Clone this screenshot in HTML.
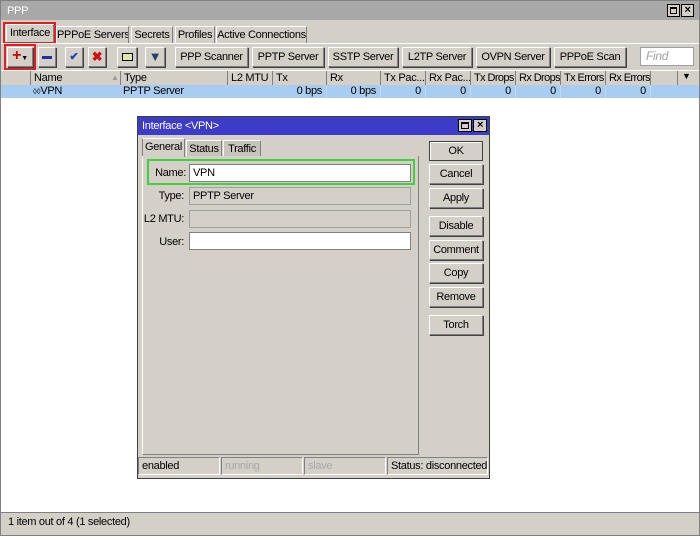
<!DOCTYPE html>
<html><head><style>
*{box-sizing:border-box;margin:0;padding:0}
body{width:700px;height:536px;background:#d4d0c8;font-family:"Liberation Sans",sans-serif;font-size:11px;letter-spacing:-0.3px;color:#000;position:relative;overflow:hidden;white-space:nowrap}
.a{position:absolute}
.btn{position:absolute;border:1px solid #fff;border-right-color:#808080;border-bottom-color:#808080;background:#d4d0c8;text-align:center;line-height:18px;box-shadow:1px 1px 0 #404040;overflow:hidden}
.tab{position:absolute;border:1px solid #fff;border-right-color:#808080;border-bottom:none;text-align:center;line-height:16px;background:#d4d0c8;overflow:hidden}
.hc{position:absolute;top:71px;height:14px;border-right:1px solid #808080;line-height:14px;padding-left:3px;overflow:hidden}
.rc{position:absolute;top:85px;height:13px;line-height:13px;text-align:right;padding-right:4px;border-right:1px solid #c0d8f0}
.inp{position:absolute;height:18px;border:1px solid #808080;background:#fff;line-height:16px;padding-left:3px}
.sb{position:absolute;height:18px;border:1px solid #808080;border-right-color:#fff;border-bottom-color:#fff;line-height:16px;padding-left:3px;overflow:hidden}
</style></head><body>
<div class="a" style="left:0;top:0;width:700px;height:536px;border:1px solid #808080"></div>
<div class="a" style="left:1px;top:1px;width:698px;height:19px;background:#a8a8a8;color:#fff;line-height:20px;padding-left:6px">PPP</div>
<div class="a" style="left:667px;top:4px;width:13px;height:13px;border:1px solid #000;background:#d4d0c8"><div style="margin:2px;width:7px;height:7px;border:1px solid #000;border-top-width:2px"></div></div>
<div class="a" style="left:681px;top:4px;width:13px;height:13px;border:1px solid #000;background:#d4d0c8;font-size:11px;font-weight:bold;line-height:11px;text-align:center">×</div>
<!-- tabs -->
<div class="tab" style="left:6px;top:24px;width:48px;height:19px;background:#d4d0c8">Interface</div>
<div class="a" style="left:3px;top:22px;width:53px;height:22px;border:2px solid #e02020"></div>
<div class="tab" style="left:56px;top:26px;width:73px;height:17px">PPPoE Servers</div>
<div class="tab" style="left:131px;top:26px;width:42px;height:17px">Secrets</div>
<div class="tab" style="left:175px;top:26px;width:40px;height:17px">Profiles</div>
<div class="tab" style="left:216px;top:26px;width:91px;height:17px">Active Connections</div>
<div class="a" style="left:1px;top:43px;width:698px;height:1px;background:#fff"></div>
<!-- toolbar -->
<div class="btn" style="left:7px;top:47px;width:26px;height:20px;color:#d00000;font-weight:bold;font-size:16px;line-height:16px">+<span style="font-size:7px;color:#000">▼</span></div>
<div class="a" style="left:4px;top:44px;width:32px;height:26px;border:2px solid #e02020"></div>
<div class="btn" style="left:38px;top:47px;width:18px;height:20px"><div style="margin:8px auto 0;width:10px;height:3px;background:#2030a0"></div></div>
<div class="btn" style="left:65px;top:47px;width:18px;height:20px;color:#2040c0;font-weight:bold">✔</div>
<div class="btn" style="left:88px;top:47px;width:18px;height:20px;color:#d01010;font-weight:bold;font-size:13px">✖</div>
<div class="btn" style="left:117px;top:47px;width:20px;height:20px"><div style="margin:5px auto 0;width:11px;height:8px;border:1px solid #000;background:#e0e8a0"></div></div>
<div class="btn" style="left:145px;top:47px;width:20px;height:20px;font-size:13px;color:#204070">▼</div>
<div class="btn" style="left:175px;top:47px;width:73px;height:20px">PPP Scanner</div>
<div class="btn" style="left:252px;top:47px;width:72px;height:20px">PPTP Server</div>
<div class="btn" style="left:328px;top:47px;width:70px;height:20px">SSTP Server</div>
<div class="btn" style="left:402px;top:47px;width:70px;height:20px">L2TP Server</div>
<div class="btn" style="left:476px;top:47px;width:74px;height:20px">OVPN Server</div>
<div class="btn" style="left:554px;top:47px;width:72px;height:20px">PPPoE Scan</div>
<div class="a" style="left:640px;top:47px;width:54px;height:19px;background:#fff;border:1px solid #a0a0a0;color:#a0a0a0;font-style:italic;padding-left:5px;line-height:17px;font-size:12px">Find</div>
<!-- header -->
<div class="a" style="left:1px;top:70px;width:698px;height:1px;background:#fff"></div>
<div class="hc" style="left:1px;width:30px"></div>
<div class="hc" style="left:31px;width:90px">Name<span style="position:absolute;left:80px;color:#999;font-size:8px">▲</span></div>
<div class="hc" style="left:121px;width:107px">Type</div>
<div class="hc" style="left:228px;width:45px">L2 MTU</div>
<div class="hc" style="left:273px;width:54px">Tx</div>
<div class="hc" style="left:327px;width:54px">Rx</div>
<div class="hc" style="left:381px;width:45px">Tx Pac...</div>
<div class="hc" style="left:426px;width:45px">Rx Pac...</div>
<div class="hc" style="left:471px;width:45px;letter-spacing:-0.6px">Tx Drops</div>
<div class="hc" style="left:516px;width:45px;letter-spacing:-0.6px">Rx Drops</div>
<div class="hc" style="left:561px;width:45px;letter-spacing:-0.6px">Tx Errors</div>
<div class="hc" style="left:606px;width:45px;letter-spacing:-0.6px">Rx Errors</div>
<div class="hc" style="left:651px;width:27px"></div>
<div class="a" style="left:682px;top:71px;font-size:9px">▼</div>
<!-- row -->
<div class="a" style="left:1px;top:85px;width:698px;height:13px;background:#a8cdf0"></div>
<div class="a" style="left:33px;top:85px;line-height:13px"><span style="font-size:8px">◊◊</span>VPN</div>
<div class="a" style="left:123px;top:85px;line-height:13px">PPTP Server</div>
<div class="rc" style="left:273px;width:54px">0 bps</div>
<div class="rc" style="left:327px;width:54px">0 bps</div>
<div class="rc" style="left:381px;width:45px">0</div>
<div class="rc" style="left:426px;width:45px">0</div>
<div class="rc" style="left:471px;width:45px">0</div>
<div class="rc" style="left:516px;width:45px">0</div>
<div class="rc" style="left:561px;width:45px">0</div>
<div class="rc" style="left:606px;width:45px">0</div>
<div class="a" style="left:1px;top:98px;width:698px;height:414px;background:#fff"></div>
<div class="a" style="left:1px;top:512px;width:698px;height:1px;background:#808080"></div>
<div class="a" style="left:8px;top:516px">1 item out of 4 (1 selected)</div>
<!-- dialog -->
<div class="a" style="left:137px;top:116px;width:353px;height:363px;background:#d4d0c8;border:1px solid #404040"></div>
<div class="a" style="left:138px;top:117px;width:351px;height:18px;background:#3c3cc8;color:#fff;line-height:18px;padding-left:4px">Interface &lt;VPN&gt;</div>
<div class="a" style="left:458px;top:119px;width:14px;height:13px;border:1px solid #000;background:#d4d0c8"><div style="margin:2px;width:8px;height:7px;border:1px solid #000;border-top-width:2px"></div></div>
<div class="a" style="left:473px;top:119px;width:14px;height:13px;border:1px solid #000;background:#d4d0c8;font-weight:bold;line-height:11px;text-align:center">×</div>
<div class="tab" style="left:142px;top:138px;width:43px;height:19px;border-color:#fff #808080">General</div>
<div class="tab" style="left:186px;top:140px;width:36px;height:16px;background:#c8c4bc">Status</div>
<div class="tab" style="left:223px;top:140px;width:38px;height:16px;background:#c8c4bc">Traffic</div>
<div class="a" style="left:142px;top:156px;width:277px;height:299px;border:1px solid #fff;border-right-color:#808080;border-bottom-color:#808080;border-top:none"></div>
<div class="a" style="left:147px;top:159px;width:268px;height:26px;border:2px solid #40d040"></div>
<div class="a" style="left:148px;top:167px;width:38px;text-align:right">Name:</div>
<div class="inp" style="left:189px;top:164px;width:222px">VPN</div>
<div class="a" style="left:148px;top:190px;width:36px;text-align:right">Type:</div>
<div class="inp" style="left:189px;top:187px;width:222px;background:#d4d0c8;border-color:#a0a0a0">PPTP Server</div>
<div class="a" style="left:140px;top:213px;width:44px;text-align:right">L2 MTU:</div>
<div class="inp" style="left:189px;top:210px;width:222px;background:#d4d0c8;border-color:#a0a0a0"></div>
<div class="a" style="left:148px;top:236px;width:36px;text-align:right">User:</div>
<div class="inp" style="left:189px;top:232px;width:222px"></div>
<div class="btn" style="left:429px;top:141px;width:54px;height:20px;border:1px solid #404040;box-shadow:inset 1px 1px 0 #fff">OK</div>
<div class="btn" style="left:429px;top:164px;width:54px;height:20px">Cancel</div>
<div class="btn" style="left:429px;top:188px;width:54px;height:20px">Apply</div>
<div class="btn" style="left:429px;top:216px;width:54px;height:20px">Disable</div>
<div class="btn" style="left:429px;top:240px;width:54px;height:20px">Comment</div>
<div class="btn" style="left:429px;top:263px;width:54px;height:20px">Copy</div>
<div class="btn" style="left:429px;top:287px;width:54px;height:20px">Remove</div>
<div class="btn" style="left:429px;top:315px;width:54px;height:20px">Torch</div>
<div class="sb" style="left:138px;top:457px;width:82px">enabled</div>
<div class="sb" style="left:221px;top:457px;width:82px;color:#a8a8a8">running</div>
<div class="sb" style="left:304px;top:457px;width:82px;color:#a8a8a8">slave</div>
<div class="sb" style="left:387px;top:457px;width:101px">Status: disconnected</div>
</body></html>
